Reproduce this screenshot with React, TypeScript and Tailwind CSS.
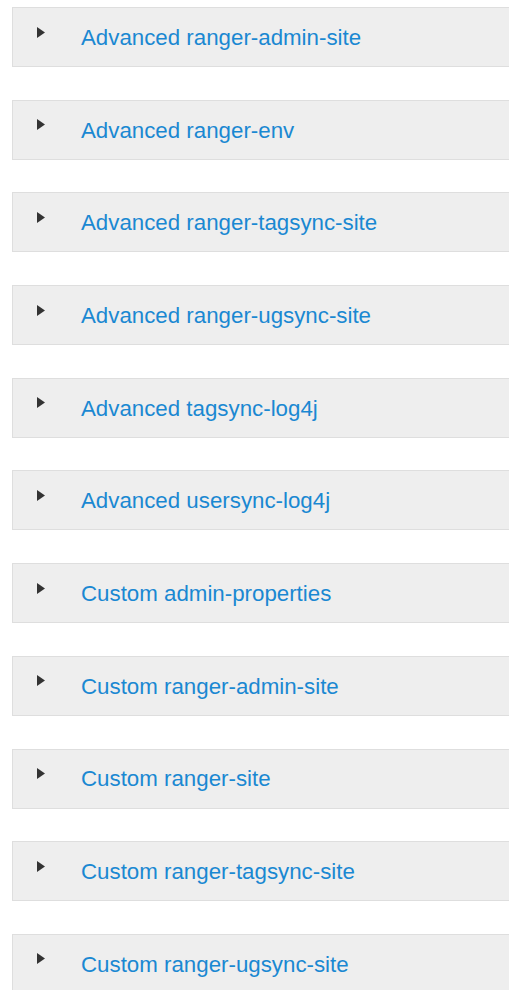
import React from 'react';

const sections = [
  'Advanced ranger-admin-site',
  'Advanced ranger-env',
  'Advanced ranger-tagsync-site',
  'Advanced ranger-ugsync-site',
  'Advanced tagsync-log4j',
  'Advanced usersync-log4j',
  'Custom admin-properties',
  'Custom ranger-admin-site',
  'Custom ranger-site',
  'Custom ranger-tagsync-site',
  'Custom ranger-ugsync-site',
];

const Caret = () => (
  <svg width="8" height="11" viewBox="0 0 8 11" className="block">
    <polygon points="0,0 8,5.5 0,11" fill="#333333" />
  </svg>
);

export default function App() {
  return (
    <div className="w-full overflow-hidden bg-white pt-[7px] pl-[12px]" style={{ fontFamily: '"Liberation Sans", Arial, sans-serif' }}>
      {sections.map((name) => (
        <div
          key={name}
          className="mb-[32.7px] flex h-[60px] w-[calc(100%+12px)] items-center border border-[#dedede] bg-[#eeeeee]"
        >
          <div className="ml-[24px] mb-[10px] w-[44px]">
            <Caret />
          </div>
          <a className="mt-[2px] cursor-pointer text-[22.3px] leading-none text-[#1a88d2]">{name}</a>
        </div>
      ))}
    </div>
  );
}
